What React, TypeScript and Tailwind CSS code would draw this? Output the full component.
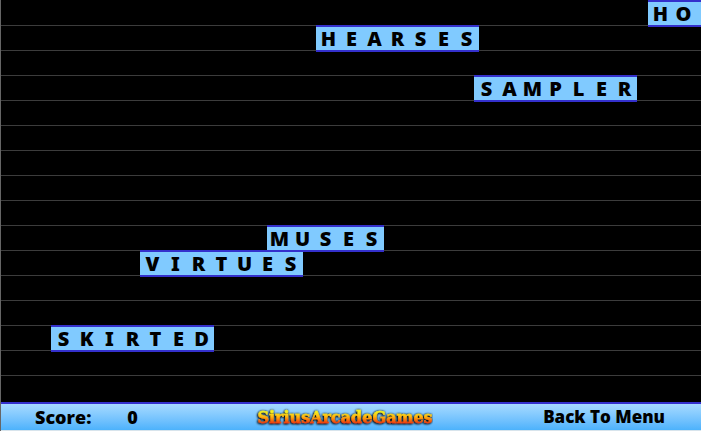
type FallingWord = { text: string; cells: number; row: number; x: number };

const ROW_COUNT = 16;
const CELL_WIDTH = 23;

const words: FallingWord[] = [
  { text: "HO", cells: 5, row: 0, x: 647 },
  { text: "HEARSES", cells: 7, row: 1, x: 315 },
  { text: "SAMPLER", cells: 7, row: 3, x: 473 },
  { text: "MUSES", cells: 5, row: 9, x: 266 },
  { text: "VIRTUES", cells: 7, row: 10, x: 139 },
  { text: "SKIRTED", cells: 7, row: 13, x: 50 },
];

function WordTile({ word }: { word: FallingWord }) {
  return (
    <div
      className="absolute -top-px z-10 flex h-[27px] border-y-2 border-[#3430cc] bg-[#80caff] pl-px"
      style={{ left: word.x, width: word.cells * CELL_WIDTH + 2 }}
    >
      {word.text.split("").map((letter, i) => (
        <span
          key={i}
          className="w-[23px] shrink-0 text-center font-['Noto_Sans',sans-serif] text-[20px] leading-[23px] font-black text-black"
        >
          {letter}
        </span>
      ))}
    </div>
  );
}

function Row({ index }: { index: number }) {
  const first = index === 0;
  const last = index === ROW_COUNT - 1;
  return (
    <div
      className={`relative border-t ${first ? "border-black" : "border-[#3c3c3c]"} ${last ? "grow" : "h-[25px] shrink-0"}`}
    >
      {words
        .filter((w) => w.row === index)
        .map((w) => (
          <WordTile key={w.text} word={w} />
        ))}
    </div>
  );
}

function Logo() {
  return (
    <svg width="184" height="24" viewBox="0 0 184 24" role="img" aria-label="SiriusArcadeGames">
      <defs>
        <linearGradient id="flame" gradientUnits="userSpaceOnUse" x1="0" y1="5" x2="0" y2="19">
          <stop offset="0.15" stopColor="#f4f020" />
          <stop offset="0.5" stopColor="#ffb010" />
          <stop offset="0.95" stopColor="#ee3408" />
        </linearGradient>
        <filter id="glow" x="-5%" y="-20%" width="110%" height="140%">
          <feGaussianBlur in="SourceAlpha" stdDeviation="0.8" result="soft" />
          <feOffset in="soft" dx="-1" dy="1" result="moved" />
          <feMerge>
            <feMergeNode in="moved" />
            <feMergeNode in="soft" />
            <feMergeNode in="SourceGraphic" />
          </feMerge>
        </filter>
      </defs>
      <text
        x="96"
        y="18"
        fontFamily="'DejaVu Serif', serif"
        fontWeight="700"
        fontSize="16"
        textAnchor="middle"
        fill="url(#flame)"
        stroke="url(#flame)"
        strokeWidth="0.4"
        filter="url(#glow)"
      >
        SiriusArcadeGames
      </text>
    </svg>
  );
}

export default function App() {
  return (
    <div className="flex h-screen flex-col overflow-hidden border-l border-[#666666] bg-black">
      <main className="flex min-h-0 grow flex-col">
        {Array.from({ length: ROW_COUNT }, (_, i) => (
          <Row key={i} index={i} />
        ))}
      </main>
      <footer className="z-20 flex h-[29px] shrink-0 items-center justify-between border-t-2 border-b border-t-[#3430cc] border-b-[#d8e4ec] bg-linear-to-b from-[#a6daff] to-[#4cb2fc] pr-9 pl-[34px] font-['Open_Sans',sans-serif] leading-7 font-extrabold text-black">
        <div className="flex gap-9 text-[18px]">
          <span>Score:</span>
          <span>0</span>
        </div>
        <Logo />
        <button type="button" className="cursor-pointer text-[17px] whitespace-nowrap">
          Back To Menu
        </button>
      </footer>
    </div>
  );
}
